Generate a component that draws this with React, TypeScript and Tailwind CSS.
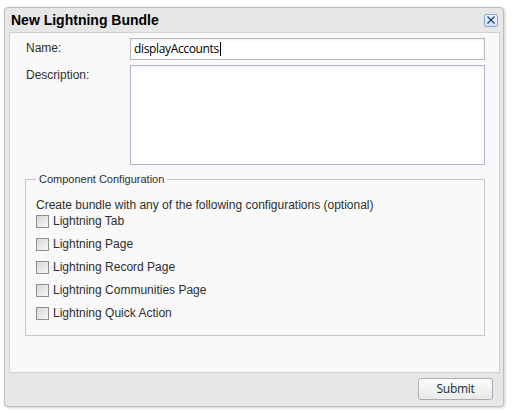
import React from "react";

const options = [
  "Lightning Tab",
  "Lightning Page",
  "Lightning Record Page",
  "Lightning Communities Page",
  "Lightning Quick Action",
];

function CloseIcon() {
  return (
    <svg width="8" height="8" viewBox="0 0 8 8" className="block">
      <path d="M0.5 0.5 L7.5 7.5 M7.5 0.5 L0.5 7.5" stroke="#1d3f8f" strokeWidth="1.3" fill="none" />
    </svg>
  );
}

export default function App() {
  return (
    <div className="min-h-[414px] w-[514px] bg-white pl-[4px] pt-[7px] font-['Liberation_Sans',Arial,sans-serif] text-[12px] text-[#2e2e2e]">
      <div className="flex h-[400px] w-[500px] flex-col rounded-[4px] border border-[#bdbdbd] bg-[#e7e7e7] shadow-[1px_1px_3px_rgba(0,0,0,0.2)]">
        {/* Title bar */}
        <div className="flex h-[24px] items-center justify-between pl-[6px] pr-[5px]">
          <span className="text-[14px] font-bold leading-none text-black">New Lightning Bundle</span>
          <div className="flex h-[13px] w-[14px] items-center justify-center rounded-[2px] border border-[#86a6d4] bg-gradient-to-b from-[#eef4fc] to-[#d3e2f6]">
            <CloseIcon />
          </div>
        </div>

        {/* Body panel */}
        <div className="ml-[4px] h-[341px] w-[491px] border border-[#d8d0d0] bg-[#f9f9f9]">
          <div className="grid grid-cols-[104px_355px] gap-y-[5px] pl-[16px] pt-[5px]">
            <div className="mt-[2px] leading-[16px]">Name:</div>
            <div className="flex h-[22px] items-center border border-[#b9b9b9] bg-white pl-[3px] shadow-[inset_0_1px_2px_rgba(0,0,0,0.08)]">
              <span className="font-['Open_Sans',sans-serif] text-[12px] tracking-[-0.35px] text-black">displayAccounts</span>
              <span className="ml-[1px] h-[14px] w-px bg-black" />
            </div>
            <div className="mt-[2px] leading-[16px]">Description:</div>
            <div className="h-[100px] border border-[#b2b5cd] bg-white shadow-[inset_0_1px_2px_rgba(0,0,0,0.06)]" />
          </div>

          <fieldset className="ml-[15px] mt-[7px] w-[460px] border border-[#c6c6d0] pb-[14px] pl-[10px]">
            <legend className="px-[3px] text-[11px] leading-[14px]">Component Configuration</legend>
            <div className="flex flex-col pt-[11px]">
              <div className="leading-[16px]">Create bundle with any of the following configurations (optional)</div>
              <div className="flex flex-col gap-[7px]">
                {options.map((o) => (
                  <div key={o} className="flex h-[16px] items-center">
                    <div className="h-[13px] w-[13px] border border-[#8f8f8f] bg-gradient-to-br from-[#d9d9d9] to-[#f6f6f6]" />
                    <span className="ml-[4px] leading-[16px]">{o}</span>
                  </div>
                ))}
              </div>
            </div>
          </fieldset>
        </div>

        {/* Footer */}
        <div className="flex flex-1 justify-end pr-[10px] pt-[5px]">
          <div className="flex h-[22px] w-[75px] items-center justify-center rounded-[3px] border border-[#acacac] bg-gradient-to-b from-[#fdfdfd] to-[#e9e9e9] font-['Open_Sans',sans-serif] text-[12px] tracking-[-0.3px] text-[#1e2a44]">
            Submit
          </div>
        </div>
      </div>
    </div>
  );
}
